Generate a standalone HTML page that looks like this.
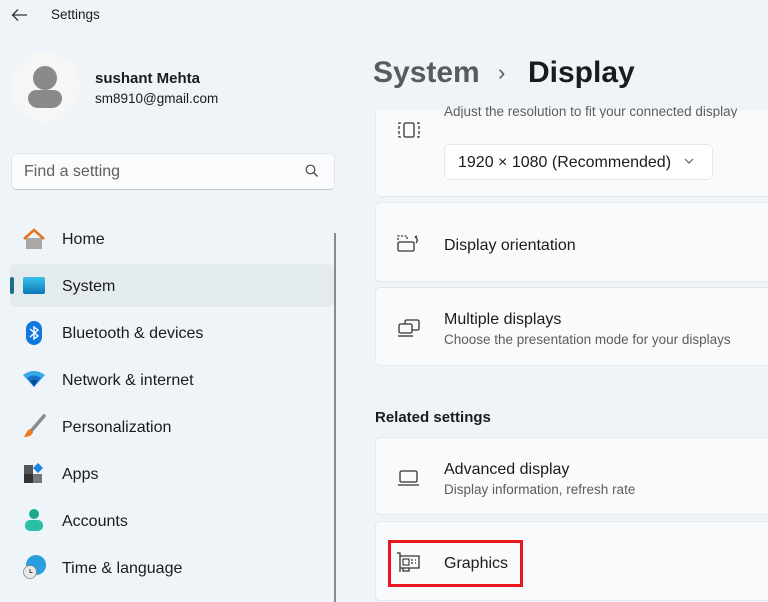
<!DOCTYPE html><html><head><style>
*{margin:0;padding:0;box-sizing:border-box}
body{width:768px;height:602px;overflow:hidden;background:#eef4f8;font-family:"Segoe UI","Liberation Sans",sans-serif;color:#1b1b1b;position:relative}
.a{position:absolute}
.nav{position:absolute;left:62px;font-size:16px;color:#1b1b1b}
.card{position:absolute;left:375px;width:400px;background:#f8fafc;border:1px solid #e4e9ee;border-radius:5px}
.t{position:absolute;left:444px;font-size:16px;color:#1b1b1b}
.s{position:absolute;left:444px;font-size:13.5px;color:#5c5c5c}
</style></head><body>
<svg class="a" style="left:11px;top:8px" width="18" height="14" viewBox="0 0 18 14"><path d="M16 7H2M7 1.5L1.5 7 7 12.5" stroke="#333" stroke-width="1.3" fill="none"/></svg>
<div class="a" style="left:51px;top:7px;font-size:13.5px;color:#1b1b1b">Settings</div>
<div class="a" style="left:10px;top:52px;width:70px;height:70px;border-radius:50%;background:#f6f6f6"></div>
<div class="a" style="left:33px;top:66px;width:24px;height:24px;border-radius:50%;background:#8a8a8a"></div>
<div class="a" style="left:28px;top:90px;width:34px;height:18px;border-radius:10px 10px 12px 12px;background:#8a8a8a"></div>
<div class="a" style="left:95px;top:70px;font-size:15px;font-weight:bold">sushant Mehta</div>
<div class="a" style="left:95px;top:91px;font-size:13.5px">sm8910@gmail.com</div>
<div class="a" style="left:11px;top:153px;width:324px;height:37px;background:#f9fbfc;border:1px solid #e2e6ea;border-bottom:1px solid #bfc4c8;border-radius:5px"></div>
<div class="a" style="left:24px;top:163px;font-size:16px;color:#5f5f5f">Find a setting</div>
<svg class="a" style="left:305px;top:164px" width="14" height="14" viewBox="0 0 14 14"><circle cx="5.5" cy="5.5" r="4.3" stroke="#444" stroke-width="1.2" fill="none"/><path d="M8.7 8.7L12.5 12.5" stroke="#444" stroke-width="1.3"/></svg>
<div class="a" style="left:334px;top:233px;width:2px;height:369px;background:#8a8a8a"></div>
<div class="a" style="left:10px;top:264px;width:324px;height:43px;background:#e4ebef;border-radius:5px"></div>
<div class="a" style="left:10px;top:277px;width:4px;height:17px;background:#1a6e8a;border-radius:2px"></div>
<svg class="a" style="left:22px;top:227px" width="24" height="24" viewBox="0 0 24 24"><path d="M4 11v11h16V11" fill="#a8a8a8"/><path d="M2 12L12 3l10 9" stroke="#e7731c" stroke-width="2.6" fill="none"/></svg>
<div class="a" style="left:23px;top:277px;width:22px;height:17px;background:linear-gradient(#3ac3ea,#0b78b8);border-radius:2px"></div>
<svg class="a" style="left:24px;top:320px" width="20" height="26" viewBox="0 0 20 26"><rect x="2" y="1" width="16" height="24" rx="8" fill="#1178e0"/><path d="M6 9l8 7-4 3V7l4 3-8 7" stroke="#fff" stroke-width="1.4" fill="none"/></svg>
<svg class="a" style="left:22px;top:370px" width="24" height="18" viewBox="0 0 24 18"><path d="M1 5Q12-3 23 5L12 17z" fill="#36a8ec"/><path d="M5 8Q12 3 19 8L12 17z" fill="#1a72c8"/><path d="M8.5 11Q12 8.5 15.5 11L12 16z" fill="#0b4a96"/></svg>
<svg class="a" style="left:22px;top:414px" width="24" height="26" viewBox="0 0 24 26"><path d="M22 2L10 16" stroke="#8a8a8a" stroke-width="3.5" stroke-linecap="round"/><path d="M8 15c-3 1-4 5-6 8 4 0 8-1 9-5z" fill="#f07a20"/></svg>
<svg class="a" style="left:23px;top:462px" width="22" height="22" viewBox="0 0 22 22"><rect x="1" y="3" width="9" height="9" fill="#555"/><rect x="1" y="12" width="9" height="9" fill="#333"/><rect x="10" y="12" width="9" height="9" fill="#777"/><path d="M15 1l5 5-5 5-5-5z" fill="#1a86e0"/></svg>
<svg class="a" style="left:24px;top:508px" width="20" height="24" viewBox="0 0 20 24"><circle cx="10" cy="6" r="5" fill="#1ca88f"/><rect x="1" y="12" width="18" height="11" rx="5" fill="#2ac0a6"/></svg>
<svg class="a" style="left:22px;top:554px" width="26" height="26" viewBox="0 0 26 26"><circle cx="14" cy="11" r="10" fill="#2a9ee0"/><circle cx="8" cy="18" r="6.5" fill="#e8e8e8" stroke="#888" stroke-width=".8"/><path d="M8 15v3.5h2.5" stroke="#444" stroke-width="1" fill="none"/></svg>
<div class="nav" style="top:231px">Home</div>
<div class="nav" style="top:278px">System</div>
<div class="nav" style="top:325px">Bluetooth &amp; devices</div>
<div class="nav" style="top:372px">Network &amp; internet</div>
<div class="nav" style="top:419px">Personalization</div>
<div class="nav" style="top:466px">Apps</div>
<div class="nav" style="top:513px">Accounts</div>
<div class="nav" style="top:560px">Time &amp; language</div>
<div class="a" style="left:373px;top:56px;font-size:30px;font-weight:600;color:#5a5a5a">System</div>
<div class="a" style="left:498px;top:60px;font-size:22px;color:#5a5a5a">›</div>
<div class="a" style="left:528px;top:56px;font-size:30px;font-weight:600;color:#1b1b1b">Display</div>
<div class="card" style="top:96px;height:101px"></div>
<div class="a" style="left:360px;top:96px;width:408px;height:14px;background:#eef4f8;overflow:hidden"><div style="position:absolute;left:84px;top:8px;font-size:13.5px;color:#5c5c5c;white-space:nowrap">Adjust the resolution to fit your connected display</div></div>
<div class="a" style="left:376px;top:110px;width:392px;height:8px;overflow:hidden"><div style="position:absolute;left:68px;top:-6px;font-size:13.5px;color:#5c5c5c;white-space:nowrap">Adjust the resolution to fit your connected display</div></div>
<svg class="a" style="left:397px;top:120px" width="24" height="20" viewBox="0 0 24 20"><rect x="7" y="3" width="10" height="14" rx="1.5" stroke="#333" stroke-width="1.3" fill="none"/><path d="M4 3H2v14h2M20 3h2v14h-2" stroke="#333" stroke-width="1.3" fill="none" stroke-dasharray="3 2"/></svg>
<div class="a" style="left:444px;top:144px;width:269px;height:36px;background:#fff;border:1px solid #e6e8ea;border-radius:5px"></div>
<div class="a" style="left:458px;top:154px;font-size:16px">1920 × 1080 (Recommended)</div>
<svg class="a" style="left:684px;top:158px" width="10" height="7" viewBox="0 0 10 7"><path d="M1 1l4 4 4-4" stroke="#555" stroke-width="1.1" fill="none"/></svg>
<div class="card" style="top:202px;height:80px"></div>
<svg class="a" style="left:396px;top:234px" width="26" height="20" viewBox="0 0 26 20"><path d="M2 6V2h9v4" stroke="#333" stroke-width="1.3" fill="none" stroke-dasharray="2 1.5"/><rect x="2" y="8" width="16" height="9" rx="1.5" stroke="#333" stroke-width="1.3" fill="none"/><path d="M19 3q4 2 1 6M19 3l2-1" stroke="#333" stroke-width="1.3" fill="none"/></svg>
<div class="t" style="top:237px">Display orientation</div>
<div class="card" style="top:287px;height:79px"></div>
<svg class="a" style="left:396px;top:318px" width="26" height="20" viewBox="0 0 26 20"><rect x="9" y="2" width="14" height="10" rx="1.5" stroke="#333" stroke-width="1.3" fill="none"/><rect x="3" y="6" width="13" height="9" rx="1.5" stroke="#333" stroke-width="1.3" fill="#f8fafc"/><path d="M2 18h15" stroke="#333" stroke-width="1.3"/></svg>
<div class="t" style="top:311px">Multiple displays</div>
<div class="s" style="top:332px">Choose the presentation mode for your displays</div>
<div class="a" style="left:375px;top:409px;font-size:15px;font-weight:600">Related settings</div>
<div class="card" style="top:437px;height:78px"></div>
<svg class="a" style="left:396px;top:468px" width="26" height="20" viewBox="0 0 26 20"><rect x="4" y="3" width="17" height="11" rx="1.5" stroke="#333" stroke-width="1.3" fill="none"/><path d="M2 17h21" stroke="#333" stroke-width="1.3"/></svg>
<div class="t" style="top:461px">Advanced display</div>
<div class="s" style="top:482px">Display information, refresh rate</div>
<div class="card" style="top:521px;height:80px"></div>
<svg class="a" style="left:396px;top:552px" width="26" height="22" viewBox="0 0 26 22"><path d="M1 1h3v19M4 4h19v12H4M7 16v3h6v-3" stroke="#333" stroke-width="1.3" fill="none"/><rect x="7" y="7" width="6" height="6" stroke="#333" stroke-width="1.1" fill="none"/><path d="M15 8h2M19 8h1M15 11h2M19 11h1" stroke="#333" stroke-width="1.3"/></svg>
<div class="t" style="top:555px">Graphics</div>
<div class="a" style="left:388px;top:540px;width:135px;height:47px;border:3px solid #e8141e"></div>
</body></html>
